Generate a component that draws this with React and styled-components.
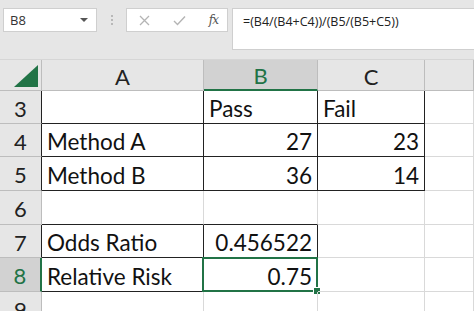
import React from "react";
import styled, { createGlobalStyle, css } from "styled-components";

const GREEN = "#217346";
const GRID = "#d9d9d9";
const HEAD_LINE = "#bdbdbd";

const Global = createGlobalStyle`
  html, body { margin: 0; padding: 0; background: #ffffff; }
  body { width: 474px; height: 311px; overflow: hidden; }
  * { box-sizing: border-box; }
`;

const Page = styled.div`
  width: 474px;
  height: 311px;
  overflow: hidden;
  background: #fff;
  font-family: Lato, "Liberation Sans", sans-serif;
`;

const TopBar = styled.div`
  height: 60px;
  background: #e6e6e6;
  display: flex;
  align-items: flex-start;
  padding: 8px 0 0 3px;
  border-bottom: 1px solid #d6d6d6;
`;

const NameBox = styled.div`
  width: 94px;
  height: 24px;
  background: #fff;
  border: 1px solid #cfcfcf;
  display: flex;
  align-items: center;
  justify-content: space-between;
  padding: 0 6px 0 6px;
  font-family: "Open Sans", "Liberation Sans", sans-serif;
  font-size: 13px;
  color: #333;
`;

const Caret = styled.span`
  width: 0;
  height: 0;
  border-left: 4px solid transparent;
  border-right: 4px solid transparent;
  border-top: 4px solid #555;
  margin-right: 2px;
`;

const Dots = styled.div`
  width: 29px;
  height: 24px;
  display: flex;
  flex-direction: column;
  align-items: center;
  justify-content: center;
  gap: 2px;
  & > span {
    width: 2px;
    height: 2px;
    border-radius: 50%;
    background: #a8a8a8;
  }
`;

const FxButtons = styled.div`
  width: 102px;
  height: 24px;
  background: #fff;
  border: 1px solid #cfcfcf;
  display: flex;
  align-items: center;
  justify-content: space-between;
  padding: 0 9px 0 12px;
`;

const Fx = styled.span`
  font-family: "DejaVu Serif", "Liberation Serif", serif;
  font-style: italic;
  font-size: 12px;
  color: #555;
  letter-spacing: -1px;
`;

const FormulaBox = styled.div`
  flex: 1;
  margin-left: 4px;
  height: 42px;
  background: #fff;
  border: 1px solid #cfcfcf;
  border-right: none;
  padding: 4px 0 0 10px;
  font-family: "Open Sans", "Liberation Sans", sans-serif;
  font-size: 12.5px;
  color: #222;
`;

const Sheet = styled.div`
  display: grid;
  grid-template-columns: 42px 162px 114px 107px 1fr;
  grid-template-rows: 31px 33px 33px 34px 34px 33px 34px 34px;
`;

const HeaderCell = styled.div`
  background: ${(p) => (p.$active ? "#d2d2d2" : "#e6e6e6")};
  color: ${(p) => (p.$active ? GREEN : "#222")};
  border-right: 1px solid ${HEAD_LINE};
  border-bottom: ${(p) => (p.$active ? `2px solid ${GREEN}` : `1px solid ${HEAD_LINE}`)};
  display: flex;
  align-items: center;
  justify-content: center;
  font-size: 22px;
  padding-top: 2px;
`;

const Corner = styled.div`
  background: #e6e6e6;
  border-right: 1px solid ${HEAD_LINE};
  border-bottom: 1px solid ${HEAD_LINE};
  display: flex;
  align-items: flex-end;
  justify-content: flex-end;
  padding: 0 2px 3px 0;
`;

const RowHead = styled.div`
  background: ${(p) => (p.$active ? "#d2d2d2" : "#e6e6e6")};
  color: ${(p) => (p.$active ? GREEN : "#222")};
  border-bottom: 1px solid ${HEAD_LINE};
  border-right: ${(p) =>
    p.$active ? `2px solid ${GREEN}` : `1px solid ${p.$edge || HEAD_LINE}`};
  display: flex;
  align-items: center;
  justify-content: center;
  font-size: 22px;
  padding-top: 2px;
`;

const Cell = styled.div`
  position: relative;
  border-right: 1px solid ${(p) => p.$right};
  border-bottom: 1px solid ${(p) => p.$bottom};
  display: flex;
  align-items: center;
  justify-content: ${(p) => (p.$num ? "flex-end" : "flex-start")};
  padding: 3px 5px 0 5px;
  font-size: 22.5px;
  color: #111;
  white-space: nowrap;
  ${(p) =>
    p.$selected &&
    css`
      &::before {
        content: "";
        position: absolute;
        left: -2px;
        top: -1px;
        right: -1px;
        bottom: -1px;
        border: 2px solid ${GREEN};
      }
      &::after {
        content: "";
        position: absolute;
        right: -4px;
        bottom: -4px;
        width: 6px;
        height: 6px;
        background: ${GREEN};
        border: 1px solid #fff;
      }
    `}
`;

const cols = [
  { key: "A", label: "A" },
  { key: "B", label: "B" },
  { key: "C", label: "C" },
  { key: "D", label: "" },
];
const rows = [
  { n: 3, cells: ["", "Pass", "Fail", ""] },
  { n: 4, cells: ["Method A", "27", "23", ""] },
  { n: 5, cells: ["Method B", "36", "14", ""] },
  { n: 6, cells: ["", "", "", ""] },
  { n: 7, cells: ["Odds Ratio", "0.456522", "", ""] },
  { n: 8, cells: ["Relative Risk", "0.75", "", ""] },
  { n: 9, cells: ["", "", "", ""] },
];

const inTable = (r, c) =>
  (r >= 3 && r <= 5 && c <= 2) || (r >= 7 && r <= 8 && c <= 1);

const isNum = (v) => /^[0-9.]+$/.test(v);

export default function App() {
  return (
    <Page>
      <Global />
      <TopBar>
        <NameBox>
          B8
          <Caret />
        </NameBox>
        <Dots>
          <span />
          <span />
          <span />
        </Dots>
        <FxButtons>
          <svg width="11" height="11" viewBox="0 0 11 11">
            <path d="M1 1 L10 10 M10 1 L1 10" stroke="#b4b4b4" strokeWidth="1.3" fill="none" />
          </svg>
          <svg width="13" height="11" viewBox="0 0 13 11">
            <path d="M1 6 L4.5 9.5 L12 1.5" stroke="#b4b4b4" strokeWidth="1.4" fill="none" />
          </svg>
          <Fx>fx</Fx>
        </FxButtons>
        <FormulaBox>=(B4/(B4+C4))/(B5/(B5+C5))</FormulaBox>
      </TopBar>
      <Sheet>
        <Corner>
          <svg width="25" height="22" viewBox="0 0 25 22">
            <polygon points="24,0 24,22 0,22" fill={GREEN} />
          </svg>
        </Corner>
        {cols.map((c) => (
          <HeaderCell key={c.key} $active={c.key === "B"}>
            {c.label}
          </HeaderCell>
        ))}
        {rows.map((row) => (
          <React.Fragment key={row.n}>
            <RowHead
              $active={row.n === 8}
              $edge={inTable(row.n, 0) ? "#222" : undefined}
            >
              {row.n}
            </RowHead>
            {row.cells.map((v, ci) => {
              const self = inTable(row.n, ci);
              const right = self || inTable(row.n, ci + 1) ? "#222" : GRID;
              const bottom = self || inTable(row.n + 1, ci) ? "#222" : GRID;
              return (
                <Cell
                  key={ci}
                  $right={right}
                  $bottom={bottom}
                  $num={isNum(v)}
                  $selected={row.n === 8 && ci === 1}
                >
                  {v}
                </Cell>
              );
            })}
          </React.Fragment>
        ))}
      </Sheet>
    </Page>
  );
}
